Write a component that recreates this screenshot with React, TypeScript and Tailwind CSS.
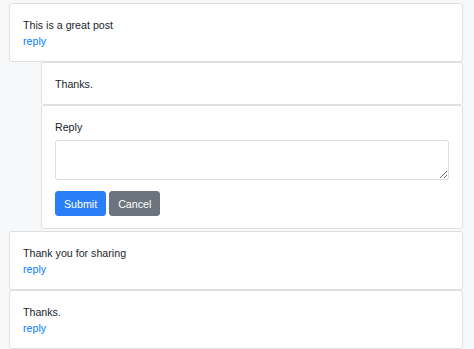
// Comment thread with inline reply form

interface Comment {
  id: number
  text: string
  canReply: boolean
}

const font = { fontFamily: '"Liberation Sans", Arial, sans-serif' }

function CommentCard({ comment }: { comment: Comment }) {
  return (
    <div className="bg-white border border-[#dfdfdf] rounded-[3px] px-[13px] pt-[13px] pb-[12px] leading-[16px]">
      <p className="text-[#212529]">{comment.text}</p>
      {comment.canReply && (
        <a href="#" className="text-[#007bff] hover:underline">
          reply
        </a>
      )}
    </div>
  )
}

function ReplyForm() {
  return (
    <div className="bg-white border border-[#dfdfdf] rounded-[3px] px-[13px] pt-[13px] pb-[12px] leading-[16px]">
      <label className="block text-[#212529] mb-[5px]">Reply</label>
      <textarea className="block w-full h-[40px] border border-[#dcdcdc] rounded-[3px] bg-white mb-[11px] px-2 py-1 outline-none" />
      <div className="flex gap-[3px]">
        <button className="h-[25px] px-[8px] rounded-[3px] border border-[#2a7ff6] bg-[#2a7ff6] text-white">
          Submit
        </button>
        <button className="h-[25px] px-[8px] rounded-[3px] border border-[#6c757d] bg-[#6c757d] text-white">
          Cancel
        </button>
      </div>
    </div>
  )
}

export default function App() {
  return (
    <div
      className="min-h-screen bg-[#f7f8fa] pt-[3px] pl-[9px] pr-[11px] text-[10.67px]"
      style={font}
    >
      <CommentCard comment={{ id: 1, text: 'This is a great post', canReply: true }} />

      {/* ── Nested replies ─────────────────────────────── */}
      <div className="pl-[32px] mb-[2px]">
        <CommentCard comment={{ id: 2, text: 'Thanks.', canReply: false }} />
        <ReplyForm />
      </div>

      <CommentCard comment={{ id: 3, text: 'Thank you for sharing', canReply: true }} />
      <CommentCard comment={{ id: 4, text: 'Thanks.', canReply: true }} />
    </div>
  )
}
